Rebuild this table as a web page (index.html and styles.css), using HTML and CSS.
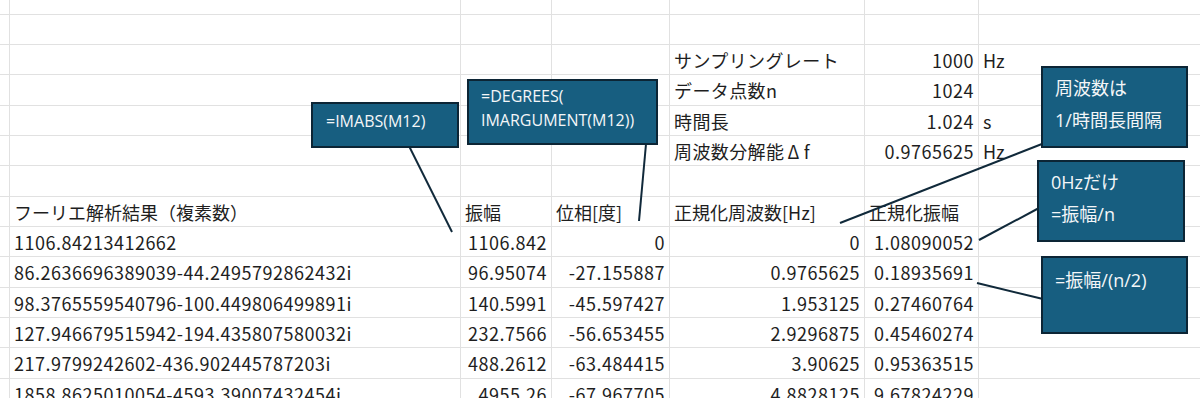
FILE: index.html
```html
<!DOCTYPE html>
<html lang="ja">
<head>
<meta charset="utf-8">
<title>フーリエ解析</title>
<link rel="stylesheet" href="styles.css">
</head>
<body>
<div class="page">
  <div class="sheet">
    <!-- row 0 -->
    <div class="c"></div><div class="c"></div><div class="c"></div><div class="c"></div><div class="c"></div><div class="c"></div><div class="c last"></div>
    <!-- row 1 -->
    <div class="c"></div><div class="c"></div><div class="c"></div><div class="c"></div><div class="c"></div><div class="c"></div><div class="c last"></div>
    <!-- row 2 -->
    <div class="c"></div><div class="c"></div><div class="c"></div><div class="c"></div><div class="c wide">サンプリングレート</div><div class="c r num">1000</div><div class="c last">Hz</div>
    <!-- row 3 -->
    <div class="c"></div><div class="c"></div><div class="c"></div><div class="c"></div><div class="c wide">データ点数n</div><div class="c r num">1024</div><div class="c last"></div>
    <!-- row 4 -->
    <div class="c"></div><div class="c"></div><div class="c"></div><div class="c"></div><div class="c wide">時間長</div><div class="c r num">1.024</div><div class="c last">s</div>
    <!-- row 5 -->
    <div class="c"></div><div class="c"></div><div class="c"></div><div class="c"></div><div class="c wide">周波数分解能<span class="delta">Δ</span>f</div><div class="c r num">0.9765625</div><div class="c last">Hz</div>
    <!-- row 6 -->
    <div class="c"></div><div class="c"></div><div class="c"></div><div class="c"></div><div class="c"></div><div class="c"></div><div class="c last"></div>
    <!-- row 7 -->
    <div class="c"></div><div class="c">フーリエ解析結果（複素数）</div><div class="c">振幅</div><div class="c">位相[度]</div><div class="c">正規化周波数[Hz]</div><div class="c">正規化振幅</div><div class="c last"></div>
    <!-- row 8 -->
    <div class="c"></div><div class="c num">1106.84213412662</div><div class="c r num">1106.842</div><div class="c r num">0</div><div class="c r num">0</div><div class="c r num">1.08090052</div><div class="c last"></div>
    <!-- row 9 -->
    <div class="c"></div><div class="c num">86.2636696389039-44.2495792862432i</div><div class="c r num">96.95074</div><div class="c r num">-27.155887</div><div class="c r num">0.9765625</div><div class="c r num">0.18935691</div><div class="c last"></div>
    <!-- row 10 -->
    <div class="c"></div><div class="c num">98.3765559540796-100.449806499891i</div><div class="c r num">140.5991</div><div class="c r num">-45.597427</div><div class="c r num">1.953125</div><div class="c r num">0.27460764</div><div class="c last"></div>
    <!-- row 11 -->
    <div class="c"></div><div class="c num">127.946679515942-194.435807580032i</div><div class="c r num">232.7566</div><div class="c r num">-56.653455</div><div class="c r num">2.9296875</div><div class="c r num">0.45460274</div><div class="c last"></div>
    <!-- row 12 -->
    <div class="c"></div><div class="c num">217.9799242602-436.902445787203i</div><div class="c r num">488.2612</div><div class="c r num">-63.484415</div><div class="c r num">3.90625</div><div class="c r num">0.95363515</div><div class="c last"></div>
    <!-- row 13 -->
    <div class="c"></div><div class="c num">1858.8625010054-4593.39007432454i</div><div class="c r num">4955.26</div><div class="c r num">-67.967705</div><div class="c r num">4.8828125</div><div class="c r num">9.67824229</div><div class="c last"></div>
  </div>

  <svg class="connectors" width="1200" height="398" viewBox="0 0 1200 398">
    <line x1="407" y1="142" x2="452" y2="232"/>
    <line x1="646" y1="144" x2="639" y2="221"/>
    <line x1="1047" y1="142" x2="840" y2="223"/>
    <line x1="1039" y1="208" x2="979" y2="240"/>
    <line x1="977" y1="283" x2="1043" y2="299"/>
  </svg>

  <div class="note note-abs">=IMABS(M12)</div>
  <div class="note note-deg">=DEGREES(<br>IMARGUMENT(M12))</div>
  <div class="note tall note-freq">周波数は<br>1/時間長間隔</div>
  <div class="note tall note-dc">0Hzだけ<br>=振幅/n</div>
  <div class="note tall note-half">=振幅/(n/2)</div>
</div>
</body>
</html>
```
FILE: styles.css
```css
html, body {
  margin: 0;
  padding: 0;
  background: #ffffff;
}

body {
  width: 1200px;
  height: 398px;
  overflow: hidden;
  font-family: "Noto Sans CJK JP", "Noto Sans", sans-serif;
}

.page {
  position: relative;
  width: 1200px;
  height: 398px;
  overflow: hidden;
}

.sheet {
  display: grid;
  grid-template-columns: 10px 451px 91px 118px 195px 114px 221px;
  grid-template-rows: 15px 30px 30px 31px 30px 30px 31px 30px 30px 31px 30px 30px 31px 30px;
  font-size: 18px;
  color: #1e1e1e;
}

.c {
  box-sizing: border-box;
  border-right: 1px solid #e1e1e1;
  border-bottom: 1px solid #e1e1e1;
  padding: 0 4px;
  display: flex;
  align-items: center;
  white-space: nowrap;
  overflow: visible;
  line-height: 1;
}

.c.r {
  justify-content: flex-end;
}

.c.num {
  letter-spacing: 0.5px;
}

.c.wide {
  letter-spacing: 0.4px;
}

.c.last {
  border-right: none;
}

.delta {
  margin: 0 4px 0 3px;
}

.connectors {
  position: absolute;
  left: 0;
  top: 0;
}

.connectors line {
  stroke: #10293a;
  stroke-width: 2;
}

.note {
  position: absolute;
  box-sizing: border-box;
  background: #175e80;
  border: 2px solid #0c2535;
  color: #f4f6f8;
  font-family: "Open Sans", "Noto Sans CJK JP", sans-serif;
  font-size: 16px;
  line-height: 24px;
  padding: 4px 0 0 12px;
  white-space: nowrap;
}

.note.tall {
  font-size: 18px;
  line-height: 32px;
  padding-left: 12px;
}

.note-abs {
  left: 311px;
  top: 102px;
  width: 148px;
  height: 46px;
  padding-top: 5px;
  padding-left: 13px;
}

.note-deg {
  left: 467px;
  top: 79px;
  width: 191px;
  height: 66px;
  padding-top: 3px;
}

.note-freq {
  left: 1041px;
  top: 66px;
  width: 147px;
  height: 82px;
  padding-top: 4px;
}

.note-dc {
  left: 1037px;
  top: 160px;
  width: 148px;
  height: 82px;
  padding-top: 4px;
}

.note-half {
  left: 1041px;
  top: 256px;
  width: 147px;
  height: 78px;
  padding-top: 6px;
}
```
